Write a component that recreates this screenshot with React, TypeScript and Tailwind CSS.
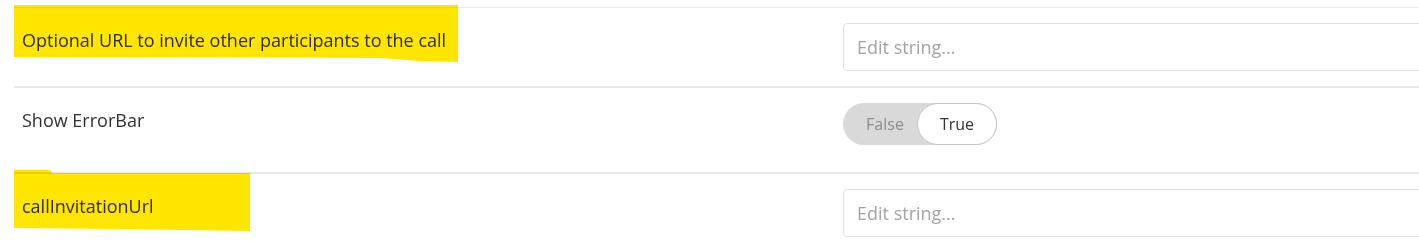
import React from "react";

const font = { fontFamily: '"Open Sans", "Noto Sans", sans-serif' };

function Highlight({ points, className }: { points: string; className: string }) {
  return (
    <svg
      className={"pointer-events-none absolute mix-blend-multiply " + className}
      width="1419"
      height="242"
      viewBox="0 0 1419 242"
    >
      <polygon points={points} fill="#ffe600" />
    </svg>
  );
}

function TextInput() {
  return (
    <div className="h-[48px] w-[640px] rounded-[4px] border border-[#e1e1e1] bg-white flex items-center pl-[13px]">
      <span className="text-[18px] text-[#a3a3a3]">Edit string...</span>
    </div>
  );
}

function Toggle() {
  return (
    <div className="flex h-[42px] w-[154px] items-center rounded-full bg-[#d9d9d9]">
      <div className="flex w-[74px] justify-center pl-[10px] text-[16px] text-[#8c8c8c]">False</div>
      <div className="flex h-full flex-1 items-center justify-center rounded-full border border-[#c6c6c6] bg-white text-[16px] text-[#333333]">
        True
      </div>
    </div>
  );
}

function Row({
  label,
  children,
  h,
  last,
}: {
  label: string;
  children: React.ReactNode;
  h: string;
  last?: boolean;
}) {
  return (
    <div
      className={
        "grid grid-cols-[829px_1fr] " + h + (last ? "" : " border-b-2 border-[#e8e8e8]")
      }
    >
      <div className="pl-[8px] pt-[20px] text-[18px] leading-[24px] text-[#323130]">{label}</div>
      <div className="pt-[15px]">{children}</div>
    </div>
  );
}

export default function App() {
  return (
    <div className="relative h-[242px] w-[1419px] overflow-hidden bg-white" style={font}>
      <div className="pl-[14px] pt-[7px]">
        <div className="border-t border-[#ececec]">
          <Row label="Optional URL to invite other participants to the call" h="h-[80px]">
            <TextInput />
          </Row>
          <Row label="Show ErrorBar" h="h-[86px]">
            <Toggle />
          </Row>
          <Row label="callInvitationUrl" h="h-[80px]" last>
            <TextInput />
          </Row>
        </div>
      </div>
      <Highlight
        className="left-0 top-0"
        points="14,5 458,5 458,62 420,61 380,58 200,57 14,57"
      />
      <Highlight
        className="left-0 top-0"
        points="14,170 50,170 52,173 250,173 250,231 120,229 14,228"
      />
    </div>
  );
}
